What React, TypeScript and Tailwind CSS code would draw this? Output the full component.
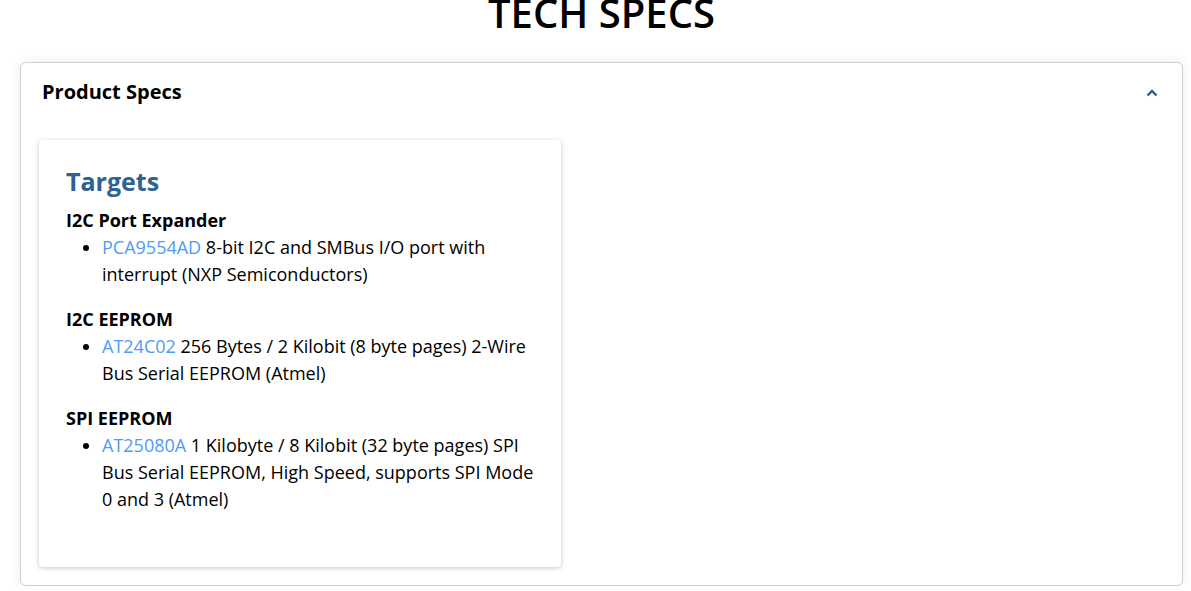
import React from "react";

const Item = ({ code, text }: { code: string; text: string }) => (
  <li className="leading-[27px]">
    <a className="text-[#4c9cf7]">{code}</a> {text}
  </li>
);

export default function App() {
  return (
    <div className="min-h-screen bg-white text-black" style={{ fontFamily: '"Open Sans", sans-serif' }}>
      <h1 className="ml-[20px] mr-[8px] text-center text-[40px] font-semibold leading-[40px] -mt-[7px] mb-[29px]">TECH SPECS</h1>
      <div className="ml-[20px] mr-[8px] rounded-[6px] border border-[#cfcfcf] bg-white shadow-[0_0_12px_rgba(0,0,0,0.08)]">
        <div className="flex items-center justify-between pl-[21px] pr-[24px] h-[58px]">
          <span className="text-[20px] font-bold">Product Specs</span>
          <svg width="12" height="8" viewBox="0 0 12 8" className="mt-[1px]">
            <polyline points="1.5,6.5 6,2 10.5,6.5" fill="none" stroke="#2b5f8f" strokeWidth="2.4" />
          </svg>
        </div>
        <div className="px-[18px] pt-[19px] pb-[18px]">
          <div className="w-[522px] rounded-[4px] bg-white shadow-[0_1px_5px_rgba(0,0,0,0.22)] pl-[27px] pr-[18px] pt-[24px] pb-[54px] text-[18px]">
            <h2 className="text-[25px] font-bold text-[#2d6292] leading-[34px] mb-[9px]">Targets</h2>
            <h3 className="font-bold leading-[27px]">I2C Port Expander</h3>
            <ul className="list-disc pl-[36px]">
              <Item code="PCA9554AD" text="8-bit I2C and SMBus I/O port with interrupt (NXP Semiconductors)" />
            </ul>
            <h3 className="font-bold leading-[27px] mt-[18px]">I2C EEPROM</h3>
            <ul className="list-disc pl-[36px]">
              <Item code="AT24C02" text="256 Bytes / 2 Kilobit (8 byte pages) 2-Wire Bus Serial EEPROM (Atmel)" />
            </ul>
            <h3 className="font-bold leading-[27px] mt-[18px]">SPI EEPROM</h3>
            <ul className="list-disc pl-[36px]">
              <Item code="AT25080A" text="1 Kilobyte / 8 Kilobit (32 byte pages) SPI Bus Serial EEPROM, High Speed, supports SPI Mode 0 and 3 (Atmel)" />
            </ul>
          </div>
        </div>
      </div>
    </div>
  );
}
